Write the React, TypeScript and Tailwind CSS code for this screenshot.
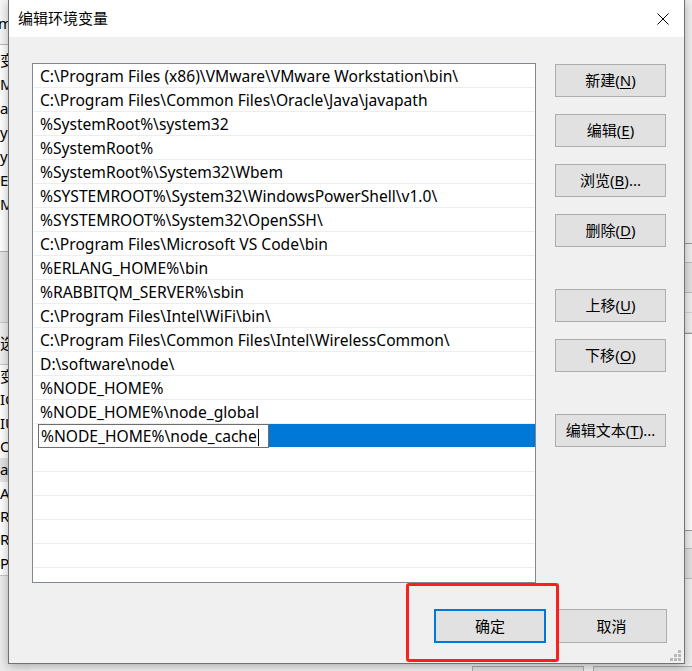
import React from "react";

const rows = [
  "C:\\Program Files (x86)\\VMware\\VMware Workstation\\bin\\",
  "C:\\Program Files\\Common Files\\Oracle\\Java\\javapath",
  "%SystemRoot%\\system32",
  "%SystemRoot%",
  "%SystemRoot%\\System32\\Wbem",
  "%SYSTEMROOT%\\System32\\WindowsPowerShell\\v1.0\\",
  "%SYSTEMROOT%\\System32\\OpenSSH\\",
  "C:\\Program Files\\Microsoft VS Code\\bin",
  "%ERLANG_HOME%\\bin",
  "%RABBITQM_SERVER%\\sbin",
  "C:\\Program Files\\Intel\\WiFi\\bin\\",
  "C:\\Program Files\\Common Files\\Intel\\WirelessCommon\\",
  "D:\\software\\node\\",
  "%NODE_HOME%",
  "%NODE_HOME%\\node_global",
];

function Btn({ label, mn, suffix, className = "" }: { label: string; mn?: string; suffix?: string; className?: string }) {
  return (
    <div
      className={
        "w-[111px] h-[33px] bg-[#e1e1e1] border border-[#adadad] flex items-center justify-center text-[15px] text-black leading-none " +
        className
      }
    >
      <span>
        {label}
        {mn ? (
          <>
            (<span className="underline underline-offset-2">{mn}</span>)
          </>
        ) : null}
        {suffix}
      </span>
    </div>
  );
}

function Background() {
  const leftTop = ["变", "M", "a", "y", "y", "E", "M"];
  const leftBottom = ["变", "IC", "IU", "OS", "a", "A", "R", "R", "P"];
  return (
    <div className="absolute inset-0 bg-[#f0f0f0] text-[15px] text-black">
      <div className="absolute left-0 top-0 w-[30px] h-full flex flex-col">
        <div className="h-[45px] bg-[#f7f7f7] flex items-center border-b border-[#b9b9b9] pt-[2px]">
          <span className="-ml-[2px]">m</span>
        </div>
        <div className="h-[206px] bg-white flex flex-col pt-[3px]">
          {leftTop.map((t, i) => (
            <div key={i} className="h-[24px] flex items-center leading-none">
              {t}
            </div>
          ))}
        </div>
        <div className="h-[72px] bg-[#e6e6e6] border-t border-[#b0b0b0] border-b border-b-[#c8c8c8]" />
        <div className="h-[42px] bg-[#f0f0f0] flex items-center border-b border-[#c8c8c8]">
          <span>选</span>
        </div>
        <div className="h-[210px] bg-white flex flex-col">
          {leftBottom.map((t, i) => (
            <div key={i} className={"h-[24px] flex items-center leading-none " + (i === 4 ? "bg-[#e5e5e5]" : "")}>
              {t}
            </div>
          ))}
        </div>
        <div className="flex-1 border-t border-[#c8c8c8] bg-[#ececec]" />
      </div>
      <div className="absolute right-0 top-0 w-[8px] h-full overflow-hidden flex flex-col bg-[#f0f0f0]">
        <div className="h-[244px] bg-[#f0f0f0] border-b border-[#9a9a9a]" />
        <div className="h-[18px] bg-[#f0f0f0]" />
        <div className="h-[31px] bg-[#e3e3e3] border-y border-[#bdbdbd]" />
        <div className="h-[20px] border-b border-[#d5d5d5]" />
        <div className="h-[20px] border-b border-[#d5d5d5]" />
        <div className="h-[197px] border-t border-[#9a9a9a] bg-white" />
        <div className="h-[18px] border-t border-[#9a9a9a]" />
        <div className="h-[31px] bg-[#e3e3e3] border-y border-[#bdbdbd]" />
        <div className="flex-1" />
      </div>
      <div className="absolute left-[472px] top-[666px] w-[112px] h-[12px] bg-[#e1e1e1] border border-[#adadad]" />
      <div className="absolute left-[593px] top-[666px] w-[112px] h-[12px] bg-[#e1e1e1] border border-[#adadad]" />
    </div>
  );
}

export default function App() {
  return (
    <div className="relative w-[692px] h-[671px] overflow-hidden font-['Noto_Sans','Noto_Sans_CJK_SC',sans-serif]">
      <Background />
      <div className="absolute left-[8px] top-0 w-[677px] h-[664px] border-x border-b border-[#727272] bg-[#f0f0f0] shadow-[0_2px_10px_rgba(0,0,0,0.3)] flex flex-col">
        <div className="h-[37px] bg-white flex items-center justify-between pl-[9px] pr-[14px] shrink-0">
          <span className="text-[15px] text-black leading-none">编辑环境变量</span>
          <svg width="12" height="12" viewBox="0 0 12 12" className="mr-[1px]">
            <path d="M0.5 0.5 L11.5 11.5 M11.5 0.5 L0.5 11.5" stroke="#000" strokeWidth="1" fill="none" />
          </svg>
        </div>
        <div className="flex-1 flex flex-col pl-[23px] pr-[17px] pt-[26px]">
          <div className="flex">
            <div className="w-[504px] h-[520px] border border-[#828790] bg-white flex flex-col text-[15.6px] text-black overflow-hidden">
              {rows.map((r, i) => (
                <div key={i} className="h-[24px] shrink-0 mx-[1px] border-b border-[#ededed] flex items-center pl-[6px] pt-[3px] leading-none whitespace-nowrap">
                  {r}
                </div>
              ))}
              <div className="h-[24px] shrink-0 flex pl-[5px] pb-[1px]">
                <div className="w-[231px] h-[24px] bg-white border border-[#6e6e6e] flex items-center pl-[2px] pt-[2px] leading-none whitespace-nowrap">
                  <span>%NODE_HOME%\node_cache</span>
                  <span className="w-[1px] h-[17px] bg-black ml-[1px]" />
                </div>
                <div className="flex-1 h-[23px] bg-[#0078d7]" />
              </div>
              {Array.from({ length: 6 }).map((_, i) => (
                <div key={"e" + i} className="h-[24px] shrink-0 mx-[1px] border-b border-[#ededed]" />
              ))}
            </div>
            <div className="ml-[19px] mt-[1px] flex flex-col">
              <Btn label="新建" mn="N" />
              <Btn label="编辑" mn="E" className="mt-[17px]" />
              <Btn label="浏览" mn="B" suffix="..." className="mt-[17px]" />
              <Btn label="删除" mn="D" className="mt-[17px]" />
              <Btn label="上移" mn="U" className="mt-[42px]" />
              <Btn label="下移" mn="O" className="mt-[17px]" />
              <Btn label="编辑文本" mn="T" suffix="..." className="mt-[42px]" />
            </div>
          </div>
          <div className="flex justify-end gap-[10px] mt-[26px]">
            <div className="w-[112px] h-[34px] bg-[#e1e1e1] border-2 border-[#0078d7] flex items-center justify-center text-[15px] text-black leading-none">
              确定
            </div>
            <Btn label="取消" className="h-[34px]" />
          </div>
        </div>
        <div className="absolute right-[3px] bottom-[2px] w-[11px] h-[11px]">
          <div className="absolute right-0 bottom-0 w-[3px] h-[3px] bg-[#b9b9b9]" />
          <div className="absolute right-[4px] bottom-0 w-[3px] h-[3px] bg-[#b9b9b9]" />
          <div className="absolute right-[8px] bottom-0 w-[3px] h-[3px] bg-[#b9b9b9]" />
          <div className="absolute right-0 bottom-[4px] w-[3px] h-[3px] bg-[#b9b9b9]" />
          <div className="absolute right-[4px] bottom-[4px] w-[3px] h-[3px] bg-[#b9b9b9]" />
          <div className="absolute right-0 bottom-[8px] w-[3px] h-[3px] bg-[#b9b9b9]" />
        </div>
      </div>
      <div className="absolute left-[406px] top-[583px] w-[153px] h-[79px] border-[3px] border-[#ff1e1e] rounded-[3px]" />
    </div>
  );
}
